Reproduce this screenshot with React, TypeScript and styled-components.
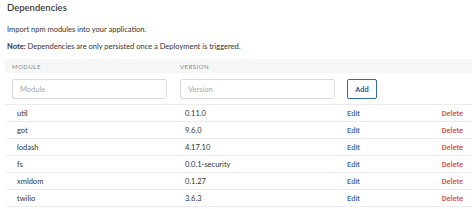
import React from "react";
import styled, { createGlobalStyle } from "styled-components";

const Global = createGlobalStyle`
  html, body { margin: 0; padding: 0; background: #fff; }
  body { font-family: Lato, "Open Sans", sans-serif; color: #333; }
`;

const Page = styled.div`
  width: 474px;
  height: 209px;
  overflow: hidden;
  padding: 0 2px 0 5px;
  box-sizing: border-box;
`;

const Title = styled.h2`
  margin: 0;
  padding: 2px 0 0 2px;
  font-size: 9.5px;
  font-weight: 600;
  line-height: 12px;
  color: #3a3a3a;
`;

const Text = styled.p`
  margin: 0;
  padding-left: 2px;
  font-size: 7.5px;
  line-height: 10px;
  color: #333;
`;

const Desc = styled(Text)`
  margin-top: 11px;
`;

const Note = styled(Text)`
  margin-top: 7px;
  b { font-weight: 700; }
`;

const Table = styled.div`
  margin-top: 7px;
  display: grid;
  grid-template-columns: 168px 167px 1fr;
`;

const Head = styled.div`
  background: #f6f6f6;
  height: 14px;
  padding-left: 7px;
  display: flex;
  align-items: center;
  font-size: 6px;
  letter-spacing: 0.5px;
  color: #888;
  text-transform: uppercase;
`;

const FormCell = styled.div`
  padding: 6px 0 5px 7px;
  border-bottom: 1px solid #ececec;
  display: flex;
  align-items: center;
`;

const Input = styled.input`
  width: 155px;
  height: 20px;
  box-sizing: border-box;
  border: 1px solid #dcdcdc;
  border-radius: 2px;
  padding: 0 7px;
  font-family: Lato, sans-serif;
  font-size: 7.5px;
  color: #333;
  outline: none;
  &::placeholder { color: #aaa; }
`;

const AddButton = styled.button`
  width: 30px;
  height: 20px;
  box-sizing: border-box;
  border: 1px solid #2f6aa6;
  border-radius: 2px;
  background: #fff;
  color: #24507f;
  font-family: Roboto, sans-serif;
  font-weight: 500;
  font-size: 7.5px;
  padding: 0;
`;

const Cell = styled.div<{ $indent?: number }>`
  height: 16px;
  border-bottom: 1px solid #ececec;
  display: flex;
  align-items: center;
  padding-left: ${(p) => p.$indent ?? 7}px;
  font-size: 7.5px;
  color: #333;
`;

const Actions = styled(Cell)`
  justify-content: space-between;
  padding-right: 9px;
`;

const Link = styled.a<{ $danger?: boolean }>`
  font-family: Roboto, sans-serif;
  font-weight: 500;
  font-size: 7.5px;
  color: ${(p) => (p.$danger ? "#e0454a" : "#3a70b4")};
  text-decoration: none;
  cursor: pointer;
`;

const deps = [
  ["util", "0.11.0"],
  ["got", "9.6.0"],
  ["lodash", "4.17.10"],
  ["fs", "0.0.1-security"],
  ["xmldom", "0.1.27"],
  ["twilio", "3.6.3"],
];

export default function App() {
  return (
    <>
      <Global />
      <Page>
        <Title>Dependencies</Title>
        <Desc>Import npm modules into your application.</Desc>
        <Note>
          <b>Note:</b> Dependencies are only persisted once a Deployment is triggered.
        </Note>
        <Table>
          <Head>Module</Head>
          <Head>Version</Head>
          <Head />
          <FormCell>
            <Input placeholder="Module" />
          </FormCell>
          <FormCell>
            <Input placeholder="Version" />
          </FormCell>
          <FormCell>
            <AddButton>Add</AddButton>
          </FormCell>
          {deps.map(([name, version]) => (
            <React.Fragment key={name}>
              <Cell $indent={12}>{name}</Cell>
              <Cell $indent={12}>{version}</Cell>
              <Actions>
                <Link>Edit</Link>
                <Link $danger>Delete</Link>
              </Actions>
            </React.Fragment>
          ))}
        </Table>
      </Page>
    </>
  );
}
